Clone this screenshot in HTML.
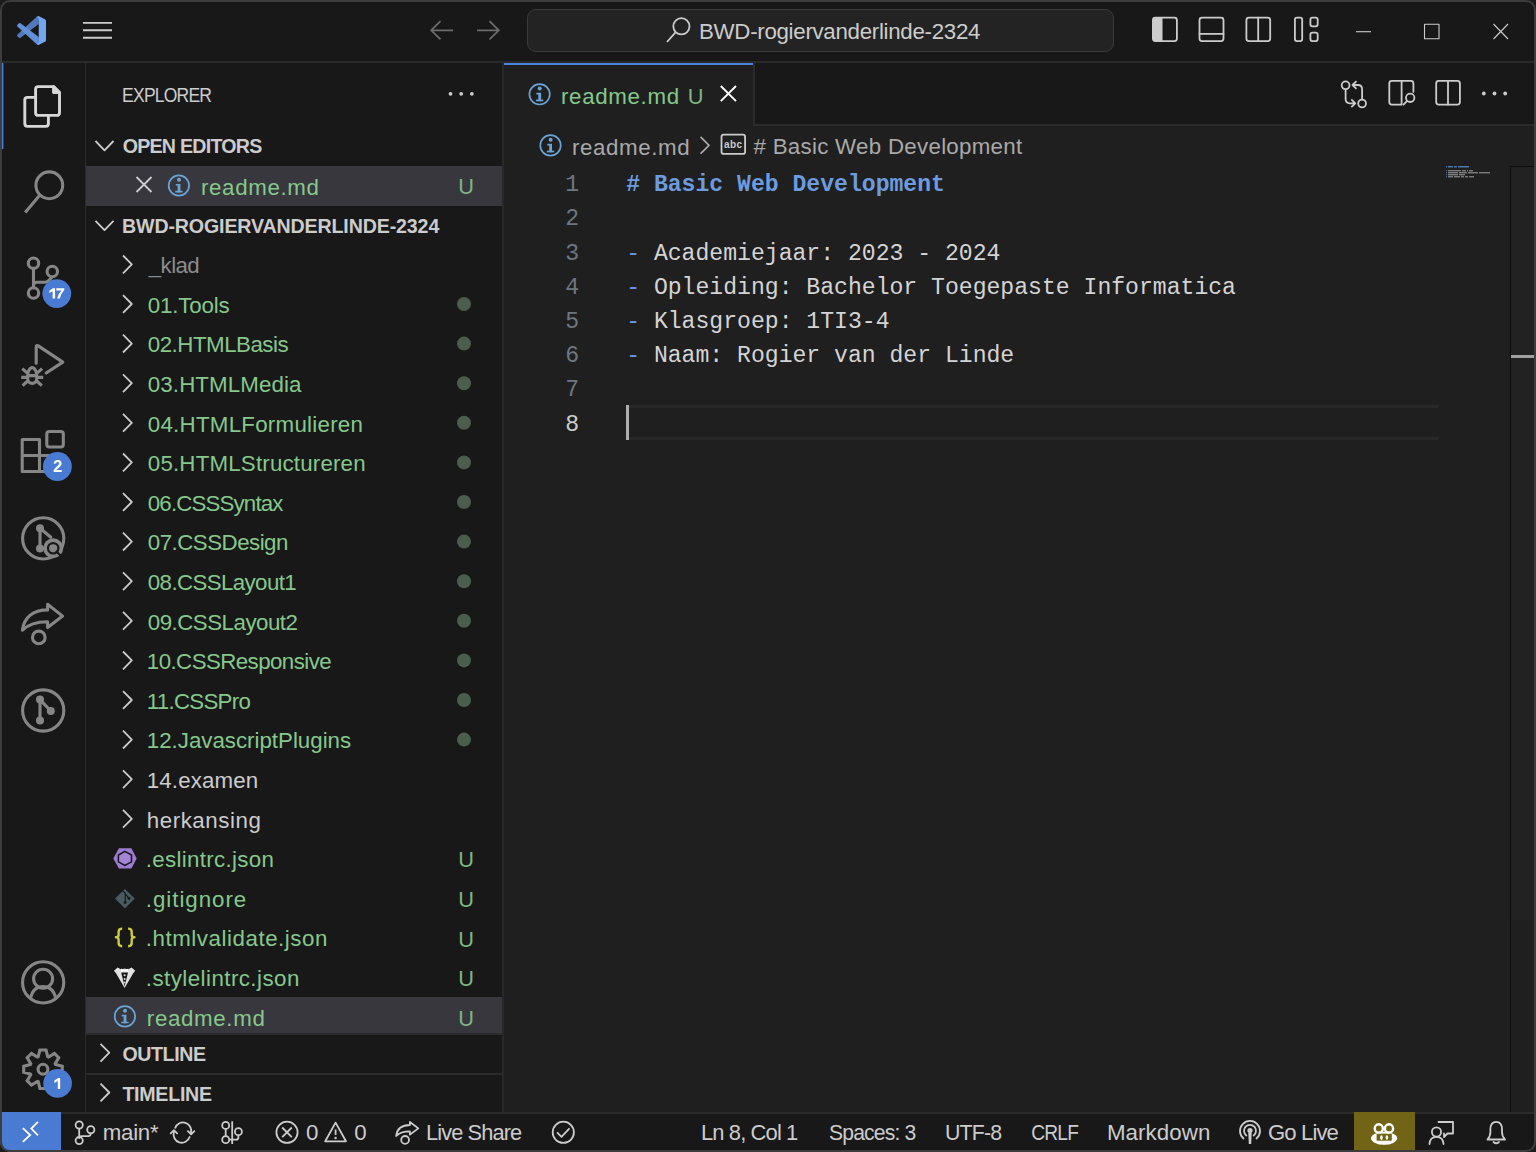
<!DOCTYPE html>
<html><head><meta charset="utf-8">
<style>
html,body{margin:0;padding:0;width:1536px;height:1152px;overflow:hidden;background:#1c1c1c}
#win{position:absolute;left:0;top:0;width:1536px;height:1152px;border-radius:10px;overflow:hidden;background:#181818}
.r{position:absolute}
.t{position:absolute;white-space:pre;line-height:1;font-family:"Liberation Sans",sans-serif}
.code{position:absolute;white-space:pre;font-family:"Liberation Mono",monospace;line-height:1}
svg{position:absolute;left:0;top:0}
#frame{position:absolute;left:0;top:0;width:1532px;height:1148px;border:2px solid #3d3d3d;border-radius:10px;box-shadow:0 0 0 4px #1c1c1c}
</style></head>
<body>
<div id="win">
<!-- backgrounds -->
<div class="r" style="left:0;top:0;width:1536px;height:62px;background:#181818"></div>
<div class="r" style="left:0;top:61px;width:1536px;height:2px;background:#2a2a2a"></div>
<!-- activity bar border -->
<div class="r" style="left:85px;top:63px;width:1px;height:1049px;background:#2b2b2b"></div>
<!-- sidebar border -->
<div class="r" style="left:502px;top:63px;width:2px;height:1049px;background:#282828"></div>
<!-- editor bg -->
<div class="r" style="left:504px;top:63px;width:1032px;height:1049px;background:#1f1f1f"></div>
<!-- tab container -->
<div class="r" style="left:504px;top:63px;width:1032px;height:62px;background:#181818"></div>
<div class="r" style="left:504px;top:124px;width:1032px;height:2px;background:#2b2b2b"></div>
<!-- active tab -->
<div class="r" style="left:504px;top:63px;width:249px;height:63px;background:#1f1f1f"></div>
<div class="r" style="left:504px;top:63px;width:249px;height:2px;background:#4a83dd"></div>
<div class="r" style="left:753px;top:63px;width:2px;height:63px;background:#2b2b2b"></div>
<!-- open editors selected row -->
<div class="r" style="left:86px;top:166px;width:416px;height:40px;background:#37373d"></div>
<!-- readme selected row -->
<div class="r" style="left:86px;top:997px;width:416px;height:36px;background:#37373d"></div>
<!-- outline / timeline borders -->
<div class="r" style="left:86px;top:1033px;width:416px;height:2px;background:#2b2b2b"></div>
<div class="r" style="left:86px;top:1073px;width:416px;height:2px;background:#2b2b2b"></div>
<!-- current line -->
<div class="r" style="left:626px;top:405px;width:812px;height:3px;background:#282828"></div>
<div class="r" style="left:626px;top:437px;width:812px;height:3px;background:#282828"></div>
<div class="r" style="left:626px;top:405px;width:3px;height:35px;background:#aeafad"></div>
<!-- overview ruler -->
<div class="r" style="left:1510px;top:166px;width:1px;height:946px;background:#0b0b10"></div>
<div class="r" style="left:1510px;top:166px;width:26px;height:1px;background:#0b0b10"></div>
<div class="r" style="left:1511px;top:167px;width:23px;height:753px;background:#222222"></div>
<div class="r" style="left:1511px;top:355px;width:23px;height:3px;background:#a0a0a0"></div>
<!-- status bar -->
<div class="r" style="left:0;top:1112px;width:1536px;height:40px;background:#181818"></div>
<div class="r" style="left:0;top:1112px;width:1536px;height:2px;background:#2b2b2b"></div>
<div class="r" style="left:0;top:1112px;width:61px;height:40px;background:#4a7bd2"></div>
<div class="r" style="left:1354px;top:1112px;width:61px;height:40px;background:#726416"></div>
<div class="r" style="left:527px;top:9px;width:587px;height:43px;box-sizing:border-box;border-radius:9px;background:#232323;border:1.6px solid #3a3a3a"></div>
<div class="code" style="left:565.14px;top:174.29px;font-size:23.1px;color:#6e7681;width:13.86px;text-align:right">1</div>
<div class="code" style="left:626.2px;top:174.29px;font-size:23.1px"><span style="color:#6c9cdf;font-weight:700"># Basic Web Development</span></div>
<div class="code" style="left:565.14px;top:208.49px;font-size:23.1px;color:#6e7681;width:13.86px;text-align:right">2</div>
<div class="code" style="left:565.14px;top:242.69px;font-size:23.1px;color:#6e7681;width:13.86px;text-align:right">3</div>
<div class="code" style="left:626.2px;top:242.69px;font-size:23.1px"><span style="color:#6796e6;font-weight:400">- </span><span style="color:#d4d4d4;font-weight:400">Academiejaar: 2023 - 2024</span></div>
<div class="code" style="left:565.14px;top:276.89px;font-size:23.1px;color:#6e7681;width:13.86px;text-align:right">4</div>
<div class="code" style="left:626.2px;top:276.89px;font-size:23.1px"><span style="color:#6796e6;font-weight:400">- </span><span style="color:#d4d4d4;font-weight:400">Opleiding: Bachelor Toegepaste Informatica</span></div>
<div class="code" style="left:565.14px;top:311.09px;font-size:23.1px;color:#6e7681;width:13.86px;text-align:right">5</div>
<div class="code" style="left:626.2px;top:311.09px;font-size:23.1px"><span style="color:#6796e6;font-weight:400">- </span><span style="color:#d4d4d4;font-weight:400">Klasgroep: 1TI3-4</span></div>
<div class="code" style="left:565.14px;top:345.29px;font-size:23.1px;color:#6e7681;width:13.86px;text-align:right">6</div>
<div class="code" style="left:626.2px;top:345.29px;font-size:23.1px"><span style="color:#6796e6;font-weight:400">- </span><span style="color:#d4d4d4;font-weight:400">Naam: Rogier van der Linde</span></div>
<div class="code" style="left:565.14px;top:379.49px;font-size:23.1px;color:#6e7681;width:13.86px;text-align:right">7</div>
<div class="code" style="left:565.14px;top:413.69px;font-size:23.1px;color:#cccccc;width:13.86px;text-align:right">8</div>
<div class="r" style="left:1446px;top:166px;width:1px;height:2px;background:linear-gradient(rgba(95,152,220,0.75) 50%,rgba(95,152,220,0.35) 50%)"></div>
<div class="r" style="left:1448px;top:166px;width:5px;height:2px;background:linear-gradient(rgba(95,152,220,0.75) 50%,rgba(95,152,220,0.35) 50%)"></div>
<div class="r" style="left:1454px;top:166px;width:3px;height:2px;background:linear-gradient(rgba(95,152,220,0.75) 50%,rgba(95,152,220,0.35) 50%)"></div>
<div class="r" style="left:1458px;top:166px;width:11px;height:2px;background:linear-gradient(rgba(95,152,220,0.75) 50%,rgba(95,152,220,0.35) 50%)"></div>
<div class="r" style="left:1446px;top:170px;width:1px;height:2px;background:linear-gradient(rgba(103,150,230,0.5) 50%,rgba(103,150,230,0.2) 50%)"></div>
<div class="r" style="left:1448px;top:170px;width:13px;height:2px;background:linear-gradient(rgba(212,212,212,0.5) 50%,rgba(212,212,212,0.22) 50%)"></div>
<div class="r" style="left:1462px;top:170px;width:4px;height:2px;background:linear-gradient(rgba(212,212,212,0.5) 50%,rgba(212,212,212,0.22) 50%)"></div>
<div class="r" style="left:1467px;top:170px;width:1px;height:2px;background:linear-gradient(rgba(212,212,212,0.5) 50%,rgba(212,212,212,0.22) 50%)"></div>
<div class="r" style="left:1469px;top:170px;width:4px;height:2px;background:linear-gradient(rgba(212,212,212,0.5) 50%,rgba(212,212,212,0.22) 50%)"></div>
<div class="r" style="left:1446px;top:172px;width:1px;height:2px;background:linear-gradient(rgba(103,150,230,0.5) 50%,rgba(103,150,230,0.2) 50%)"></div>
<div class="r" style="left:1448px;top:172px;width:10px;height:2px;background:linear-gradient(rgba(212,212,212,0.5) 50%,rgba(212,212,212,0.22) 50%)"></div>
<div class="r" style="left:1459px;top:172px;width:8px;height:2px;background:linear-gradient(rgba(212,212,212,0.5) 50%,rgba(212,212,212,0.22) 50%)"></div>
<div class="r" style="left:1468px;top:172px;width:10px;height:2px;background:linear-gradient(rgba(212,212,212,0.5) 50%,rgba(212,212,212,0.22) 50%)"></div>
<div class="r" style="left:1479px;top:172px;width:11px;height:2px;background:linear-gradient(rgba(212,212,212,0.5) 50%,rgba(212,212,212,0.22) 50%)"></div>
<div class="r" style="left:1446px;top:174px;width:1px;height:2px;background:linear-gradient(rgba(103,150,230,0.5) 50%,rgba(103,150,230,0.2) 50%)"></div>
<div class="r" style="left:1448px;top:174px;width:10px;height:2px;background:linear-gradient(rgba(212,212,212,0.5) 50%,rgba(212,212,212,0.22) 50%)"></div>
<div class="r" style="left:1459px;top:174px;width:6px;height:2px;background:linear-gradient(rgba(212,212,212,0.5) 50%,rgba(212,212,212,0.22) 50%)"></div>
<div class="r" style="left:1446px;top:176px;width:1px;height:2px;background:linear-gradient(rgba(103,150,230,0.5) 50%,rgba(103,150,230,0.2) 50%)"></div>
<div class="r" style="left:1448px;top:176px;width:5px;height:2px;background:linear-gradient(rgba(212,212,212,0.5) 50%,rgba(212,212,212,0.22) 50%)"></div>
<div class="r" style="left:1454px;top:176px;width:6px;height:2px;background:linear-gradient(rgba(212,212,212,0.5) 50%,rgba(212,212,212,0.22) 50%)"></div>
<div class="r" style="left:1461px;top:176px;width:3px;height:2px;background:linear-gradient(rgba(212,212,212,0.5) 50%,rgba(212,212,212,0.22) 50%)"></div>
<div class="r" style="left:1465px;top:176px;width:3px;height:2px;background:linear-gradient(rgba(212,212,212,0.5) 50%,rgba(212,212,212,0.22) 50%)"></div>
<div class="r" style="left:1469px;top:176px;width:5px;height:2px;background:linear-gradient(rgba(212,212,212,0.5) 50%,rgba(212,212,212,0.22) 50%)"></div>
<div class=t style="left:699.00px;top:21.32px;font-size:22.3px;letter-spacing:-0.294px;color:#cccccc;font-weight:400;font-family:'Liberation Sans', sans-serif">BWD-rogiervanderlinde-2324</div>
<div class=t style="left:122.20px;top:86.11px;font-size:19.6px;letter-spacing:-0.900px;transform:scaleX(0.8946);transform-origin:1.00px 0;color:#cccccc;font-weight:400;font-family:'Liberation Sans', sans-serif">EXPLORER</div>
<div class=t style="left:122.70px;top:136.71px;font-size:19.6px;letter-spacing:-0.731px;color:#cccccc;font-weight:700;font-family:'Liberation Sans', sans-serif">OPEN EDITORS</div>
<div class=t style="left:201.00px;top:176.62px;font-size:22.3px;letter-spacing:0.641px;color:#86c88c;font-weight:400;font-family:'Liberation Sans', sans-serif">readme.md</div>
<div class=t style="left:458.20px;top:176.15px;font-size:21.8px;letter-spacing:0.000px;color:#7db583;font-weight:400;font-family:'Liberation Sans', sans-serif">U</div>
<div class=t style="left:122.00px;top:216.71px;font-size:19.6px;letter-spacing:-0.126px;color:#cccccc;font-weight:700;font-family:'Liberation Sans', sans-serif">BWD-ROGIERVANDERLINDE-2324</div>
<div class=t style="left:148.80px;top:255.12px;font-size:22.3px;letter-spacing:-0.601px;color:#8c8c8c;font-weight:400;font-family:'Liberation Sans', sans-serif">_klad</div>
<div class=t style="left:147.80px;top:294.72px;font-size:22.3px;letter-spacing:-0.157px;color:#86c88c;font-weight:400;font-family:'Liberation Sans', sans-serif">01.Tools</div>
<div class=t style="left:147.80px;top:334.32px;font-size:22.3px;letter-spacing:-0.488px;color:#86c88c;font-weight:400;font-family:'Liberation Sans', sans-serif">02.HTMLBasis</div>
<div class=t style="left:147.80px;top:373.92px;font-size:22.3px;letter-spacing:0.116px;color:#86c88c;font-weight:400;font-family:'Liberation Sans', sans-serif">03.HTMLMedia</div>
<div class=t style="left:147.80px;top:413.52px;font-size:22.3px;letter-spacing:0.262px;color:#86c88c;font-weight:400;font-family:'Liberation Sans', sans-serif">04.HTMLFormulieren</div>
<div class=t style="left:147.80px;top:453.12px;font-size:22.3px;letter-spacing:0.190px;color:#86c88c;font-weight:400;font-family:'Liberation Sans', sans-serif">05.HTMLStructureren</div>
<div class=t style="left:147.80px;top:492.72px;font-size:22.3px;letter-spacing:-0.851px;color:#86c88c;font-weight:400;font-family:'Liberation Sans', sans-serif">06.CSSSyntax</div>
<div class=t style="left:147.80px;top:532.32px;font-size:22.3px;letter-spacing:-0.513px;color:#86c88c;font-weight:400;font-family:'Liberation Sans', sans-serif">07.CSSDesign</div>
<div class=t style="left:147.80px;top:571.92px;font-size:22.3px;letter-spacing:-0.611px;color:#86c88c;font-weight:400;font-family:'Liberation Sans', sans-serif">08.CSSLayout1</div>
<div class=t style="left:147.80px;top:611.52px;font-size:22.3px;letter-spacing:-0.507px;color:#86c88c;font-weight:400;font-family:'Liberation Sans', sans-serif">09.CSSLayout2</div>
<div class=t style="left:146.80px;top:651.12px;font-size:22.3px;letter-spacing:-0.566px;color:#86c88c;font-weight:400;font-family:'Liberation Sans', sans-serif">10.CSSResponsive</div>
<div class=t style="left:146.80px;top:690.72px;font-size:22.3px;letter-spacing:-0.735px;color:#86c88c;font-weight:400;font-family:'Liberation Sans', sans-serif">11.CSSPro</div>
<div class=t style="left:146.80px;top:730.32px;font-size:22.3px;letter-spacing:-0.008px;color:#86c88c;font-weight:400;font-family:'Liberation Sans', sans-serif">12.JavascriptPlugins</div>
<div class=t style="left:146.80px;top:769.92px;font-size:22.3px;letter-spacing:0.123px;color:#cccccc;font-weight:400;font-family:'Liberation Sans', sans-serif">14.examen</div>
<div class=t style="left:146.80px;top:809.52px;font-size:22.3px;letter-spacing:0.547px;color:#cccccc;font-weight:400;font-family:'Liberation Sans', sans-serif">herkansing</div>
<div class=t style="left:145.80px;top:849.12px;font-size:22.3px;letter-spacing:0.322px;color:#86c88c;font-weight:400;font-family:'Liberation Sans', sans-serif">.eslintrc.json</div>
<div class=t style="left:458.20px;top:849.35px;font-size:21.8px;letter-spacing:0.000px;color:#7db583;font-weight:400;font-family:'Liberation Sans', sans-serif">U</div>
<div class=t style="left:145.80px;top:888.72px;font-size:22.3px;letter-spacing:0.964px;color:#86c88c;font-weight:400;font-family:'Liberation Sans', sans-serif">.gitignore</div>
<div class=t style="left:458.20px;top:888.95px;font-size:21.8px;letter-spacing:0.000px;color:#7db583;font-weight:400;font-family:'Liberation Sans', sans-serif">U</div>
<div class=t style="left:145.80px;top:928.32px;font-size:22.3px;letter-spacing:0.549px;color:#86c88c;font-weight:400;font-family:'Liberation Sans', sans-serif">.htmlvalidate.json</div>
<div class=t style="left:458.20px;top:928.55px;font-size:21.8px;letter-spacing:0.000px;color:#7db583;font-weight:400;font-family:'Liberation Sans', sans-serif">U</div>
<div class=t style="left:145.80px;top:967.92px;font-size:22.3px;letter-spacing:0.455px;color:#86c88c;font-weight:400;font-family:'Liberation Sans', sans-serif">.stylelintrc.json</div>
<div class=t style="left:458.20px;top:968.15px;font-size:21.8px;letter-spacing:0.000px;color:#7db583;font-weight:400;font-family:'Liberation Sans', sans-serif">U</div>
<div class=t style="left:146.80px;top:1007.52px;font-size:22.3px;letter-spacing:0.654px;color:#86c88c;font-weight:400;font-family:'Liberation Sans', sans-serif">readme.md</div>
<div class=t style="left:458.20px;top:1007.75px;font-size:21.8px;letter-spacing:0.000px;color:#7db583;font-weight:400;font-family:'Liberation Sans', sans-serif">U</div>
<div class=t style="left:122.40px;top:1044.81px;font-size:19.6px;letter-spacing:-0.387px;color:#cccccc;font-weight:700;font-family:'Liberation Sans', sans-serif">OUTLINE</div>
<div class=t style="left:122.40px;top:1084.61px;font-size:19.6px;letter-spacing:-0.252px;color:#cccccc;font-weight:700;font-family:'Liberation Sans', sans-serif">TIMELINE</div>
<div class=t style="left:561.00px;top:85.52px;font-size:22.3px;letter-spacing:0.666px;color:#86c88c;font-weight:400;font-family:'Liberation Sans', sans-serif">readme.md</div>
<div class=t style="left:687.70px;top:85.65px;font-size:21.8px;letter-spacing:0.000px;color:#7db583;font-weight:400;font-family:'Liberation Sans', sans-serif">U</div>
<div class=t style="left:572.00px;top:136.62px;font-size:22.3px;letter-spacing:0.616px;color:#a9a9a9;font-weight:400;font-family:'Liberation Sans', sans-serif">readme.md</div>
<div class=t style="left:753.50px;top:136.22px;font-size:22.3px;letter-spacing:0.289px;color:#a9a9a9;font-weight:400;font-family:'Liberation Sans', sans-serif"># Basic Web Development</div>
<div class=t style="left:102.75px;top:1122.02px;font-size:22.3px;letter-spacing:-0.270px;color:#cccccc;font-weight:400;font-family:'Liberation Sans', sans-serif">main*</div>
<div class=t style="left:306.00px;top:1122.02px;font-size:22.3px;letter-spacing:0.000px;color:#cccccc;font-weight:400;font-family:'Liberation Sans', sans-serif">0</div>
<div class=t style="left:354.20px;top:1122.02px;font-size:22.3px;letter-spacing:0.000px;color:#cccccc;font-weight:400;font-family:'Liberation Sans', sans-serif">0</div>
<div class=t style="left:425.90px;top:1122.02px;font-size:22.3px;letter-spacing:-0.900px;transform:scaleX(0.9764);transform-origin:1.00px 0;color:#cccccc;font-weight:400;font-family:'Liberation Sans', sans-serif">Live Share</div>
<div class=t style="left:701.00px;top:1122.02px;font-size:22.3px;letter-spacing:-0.900px;transform:scaleX(0.9842);transform-origin:1.00px 0;color:#cccccc;font-weight:400;font-family:'Liberation Sans', sans-serif">Ln 8, Col 1</div>
<div class=t style="left:828.60px;top:1122.02px;font-size:22.3px;letter-spacing:-0.900px;transform:scaleX(0.9474);transform-origin:1.00px 0;color:#cccccc;font-weight:400;font-family:'Liberation Sans', sans-serif">Spaces: 3</div>
<div class=t style="left:945.25px;top:1122.02px;font-size:22.3px;letter-spacing:-0.900px;transform:scaleX(0.9567);transform-origin:1.00px 0;color:#cccccc;font-weight:400;font-family:'Liberation Sans', sans-serif">UTF-8</div>
<div class=t style="left:1030.90px;top:1122.02px;font-size:22.3px;letter-spacing:-0.900px;transform:scaleX(0.8608);transform-origin:1.00px 0;color:#cccccc;font-weight:400;font-family:'Liberation Sans', sans-serif">CRLF</div>
<div class=t style="left:1106.90px;top:1122.02px;font-size:22.3px;letter-spacing:0.093px;color:#cccccc;font-weight:400;font-family:'Liberation Sans', sans-serif">Markdown</div>
<div class=t style="left:1268.40px;top:1122.02px;font-size:22.3px;letter-spacing:-0.900px;transform:scaleX(0.9923);transform-origin:1.00px 0;color:#cccccc;font-weight:400;font-family:'Liberation Sans', sans-serif">Go Live</div>
<svg width="1536" height="1152" viewBox="0 0 1536 1152" fill="none" stroke-linecap="round" stroke-linejoin="round">
<g transform="translate(17,16) scale(0.29)"><path fill="#5279bb" d="M75.86 0.87 L75.01 27.3 L12.19 74.99 Q9.2 77 6.87 74.75 L1.36 69.74 Q-0.6 67 1.36 63.58 L68.76 2.08 Q72 -0.5 75.86 0.87 Z"/><path fill="#6290d8" d="M75.01 72.7 L75.86 99.13 Q72 100.5 68.76 97.92 L1.36 36.42 Q-0.6 33.2 1.36 30.26 L6.87 25.25 Q9.5 23 12.19 25.01 Z"/><path fill="#72a6ee" d="M70 1.8 Q72.5 0 75.86.87 L96.46 10.8 Q100 12.6 100 16.42 V83.58 Q100 87.4 96.46 89.2 L75.86 99.13 Q72.5 100 70 98.2 L75.01 90 V10 Z"/></g>
<path d="M83 22.9 H112 M83 30.3 H112 M83 37.7 H112" stroke="#cccccc" stroke-width="1.9" stroke-linecap="butt"/>
<path d="M453 30.3 H431.5 M440.5 21.2 L431.2 30.3 L440.5 39.4 M477 30.3 H498.5 M489.5 21.2 L498.8 30.3 L489.5 39.4" stroke="#6b6b6b" stroke-width="1.8" stroke-linecap="butt" stroke-linejoin="miter"/>
<circle cx="681.4" cy="26.3" r="8.1" stroke="#cccccc" stroke-width="1.8"/><path d="M675.5 32.4 L667 42" stroke="#cccccc" stroke-width="1.8" stroke-linecap="butt"/>
<rect x="1152.9" y="17.7" width="24" height="23.4" rx="2.5" stroke="#cccccc" stroke-width="1.8"/><path d="M1155 17.7 H1162.5 V41.1 H1155 Q1152.9 41.1 1152.9 39 V19.8 Q1152.9 17.7 1155 17.7Z" fill="#cccccc"/>
<rect x="1199.5" y="17.7" width="24" height="23.4" rx="2.5" stroke="#cccccc" stroke-width="1.8"/><path d="M1199.5 33.9 H1223.5" stroke="#cccccc" stroke-width="1.8"/>
<rect x="1246.4" y="17.7" width="23.8" height="23.4" rx="2.5" stroke="#cccccc" stroke-width="1.8"/><path d="M1258.2 17.7 V41.1" stroke="#cccccc" stroke-width="1.8"/>
<rect x="1294.9" y="17.7" width="7.3" height="23.4" rx="2" stroke="#cccccc" stroke-width="1.8"/><rect x="1310.4" y="17.7" width="7.3" height="8.6" rx="2" stroke="#cccccc" stroke-width="1.8"/><rect x="1310.4" y="32.6" width="7.3" height="8.5" rx="2" stroke="#cccccc" stroke-width="1.8"/>
<path d="M1356 31.7 H1371" stroke="#cccccc" stroke-width="1.1" stroke-linecap="butt"/><rect x="1424.5" y="24.3" width="14.5" height="14.5" stroke="#cccccc" stroke-width="1.1"/><path d="M1493.5 24 L1508 39 M1508 24 L1493.5 39" stroke="#cccccc" stroke-width="1.1" stroke-linecap="butt"/>
<rect x="2" y="63" width="1.4" height="86" fill="#4a83dd"/>
<g stroke="#d7d7d7" stroke-width="2.9"><path d="M35.6 97.4 H27.5 Q24.8 97.4 24.8 100 V123.6 Q24.8 126.4 27.5 126.4 H45.7 Q48.4 126.4 48.4 123.6 V115.4"/><path d="M38.3 86.6 H53.5 L59.5 92.6 V112.7 Q59.5 115.4 56.8 115.4 H38.3 Q35.6 115.4 35.6 112.7 V89.3 Q35.6 86.6 38.3 86.6 Z"/><path d="M53.5 86.6 V92.6 H59.5 Z" fill="#d7d7d7"/></g>
<g stroke="#868686" stroke-width="3.1"><circle cx="49.3" cy="185.3" r="13.4"/><path d="M39.5 195.5 L25.2 212.5" stroke-linecap="butt"/><circle cx="33.5" cy="263.2" r="5.2"/><circle cx="33.5" cy="293" r="5.2"/><circle cx="52.3" cy="271.5" r="5.2"/><path d="M33.5 268.4 V287.8 M33.5 285.5 Q33.5 282.3 37 282.3 H45 Q47.5 282.3 51.5 277.8"/><path d="M36.2 363.3 V347 Q36.2 344.6 38.3 345.9 L62.8 362.1 L46.2 373"/><path d="M27.7 375.6 H36.7 M27.7 375.6 V378.8 A4.5 4.6 0 0 0 36.7 378.8 V375.6 A4.5 8 0 0 0 27.7 375.6"/><path d="M21.2 377.4 H27 M37.4 377.4 H43.2 M22.3 368.6 L27.4 373.2 M42.1 368.6 L37 373.2 M22.6 385.6 L27.6 381 M41.8 385.6 L36.8 381" stroke-linecap="butt"/><path d="M22.2 439.5 H39.5 V471.5 H22.2 Z M22.2 455.5 H57.5 V471.5 H39.5" /><rect x="46.8" y="431.5" width="16.5" height="15.5" rx="2.5"/></g>
<circle cx="56.8" cy="293.6" r="14.4" fill="#4a7bd2"/><path d="M49.3 290.8 L53 288.2 H55.1 V298.6 H52.6 V291.2 L49.3 293 Z M56.3 288.2 H64.3 V290.1 Q60.6 294 59.8 298.6 H57.1 Q58 293.8 61.5 290.4 H56.3 Z" fill="#ffffff"/>
<circle cx="57.4" cy="466.5" r="14.4" fill="#4a7bd2"/><text x="57.4" y="472.4" fill="#ffffff" font-family="Liberation Sans, sans-serif" font-weight="700" font-size="16.5" text-anchor="middle" letter-spacing="-0.5">2</text>
<g stroke="#868686" stroke-width="3.1"><circle cx="43.2" cy="538.4" r="20.6"/><path d="M40 528.2 V548.5 M40 528.2 L50.8 537.2"/><circle cx="43.2" cy="710.5" r="20.6"/><path d="M40 699.6 V720.6 M40 699.6 L50.8 711"/><circle cx="43.15" cy="982.4" r="20.6"/><circle cx="43.1" cy="978.7" r="9.5"/><path d="M30.5 998.3 Q33 986.5 43.1 986.5 Q53.2 986.5 55.8 998.3"/><circle cx="38.8" cy="637.4" r="6.3"/><path d="M47.6 609.9 V604.3 L62.6 616.1 L47.6 627.6 V621.7 C35.2 621.7 27.9 624.6 22.4 630.2 C23.9 617.2 33.2 609.9 47.6 609.9 Z"/><path d="M39.91 1049.94 L46.01 1049.94 L47.70 1056.67 L48.47 1056.99 L54.42 1053.42 L58.74 1057.74 L55.17 1063.69 L55.49 1064.46 L62.22 1066.15 L62.22 1072.25 L55.49 1073.94 L55.17 1074.71 L58.74 1080.66 L54.42 1084.98 L48.47 1081.41 L47.70 1081.73 L46.01 1088.46 L39.91 1088.46 L38.22 1081.73 L37.45 1081.41 L31.50 1084.98 L27.18 1080.66 L30.75 1074.71 L30.43 1073.94 L23.70 1072.25 L23.70 1066.15 L30.43 1064.46 L30.75 1063.69 L27.18 1057.74 L31.50 1053.42 L37.45 1056.99 L38.22 1056.67 Z" stroke-width="3.1" stroke-linejoin="miter"/><circle cx="42.96" cy="1069.2" r="4.9" stroke-width="3.1"/></g>
<g fill="#868686"><circle cx="40" cy="528.2" r="4"/><circle cx="40" cy="548.5" r="4"/><circle cx="40" cy="699.6" r="4"/><circle cx="50.8" cy="711" r="4"/><circle cx="40" cy="720.6" r="4"/><circle cx="53.2" cy="548.3" r="10"/></g><circle cx="53.2" cy="548.3" r="5.2" stroke="#181818" stroke-width="2.2"/><path d="M56.5 551.5 L60 555" stroke="#181818" stroke-width="2.2"/>
<circle cx="57.6" cy="1083.4" r="14.3" fill="#4a7bd2"/><path d="M54.4 1080.6 L58.2 1078 H60.2 V1089 H57.8 V1081 L54.4 1083 Z" fill="#ffffff"/>
<g fill="#cccccc"><circle cx="450.5" cy="93.8" r="1.9"/><circle cx="461.2" cy="93.8" r="1.9"/><circle cx="471.9" cy="93.8" r="1.9"/></g>
<path d="M95.5 141 L104.5 150.3 L113.5 141" stroke="#cccccc" stroke-width="1.8" stroke-linecap="butt"/>
<path d="M95.5 220.8 L104.5 230.10000000000002 L113.5 220.8" stroke="#cccccc" stroke-width="1.8" stroke-linecap="butt"/>
<path d="M136.5 177 L151.5 192 M151.5 177 L136.5 192" stroke="#cccccc" stroke-width="1.8" stroke-linecap="butt"/>
<circle cx="178.9" cy="185.5" r="10.2" stroke="#6aa4d6" stroke-width="1.7"/><circle cx="179.00" cy="179.80" r="2" fill="#6aa4d6"/><path d="M175.70 183.90 H180.40 V192.40 H177.60 V185.60 H175.70 Z" fill="#6aa4d6"/><path d="M175.20 191.60 H182.60" stroke="#6aa4d6" stroke-width="1.7" stroke-linecap="butt"/>
<path d="M123 255.49999999999997 L131.8 264.4 L123 273.29999999999995" stroke="#cccccc" stroke-width="1.8" stroke-linecap="butt"/>
<path d="M123 295.1 L131.8 304.0 L123 312.9" stroke="#cccccc" stroke-width="1.8" stroke-linecap="butt"/>
<circle cx="464" cy="304.0" r="7" fill="#4b5e4b"/>
<path d="M123 334.7 L131.8 343.59999999999997 L123 352.49999999999994" stroke="#cccccc" stroke-width="1.8" stroke-linecap="butt"/>
<circle cx="464" cy="343.59999999999997" r="7" fill="#4b5e4b"/>
<path d="M123 374.3 L131.8 383.2 L123 392.09999999999997" stroke="#cccccc" stroke-width="1.8" stroke-linecap="butt"/>
<circle cx="464" cy="383.2" r="7" fill="#4b5e4b"/>
<path d="M123 413.9 L131.8 422.79999999999995 L123 431.69999999999993" stroke="#cccccc" stroke-width="1.8" stroke-linecap="butt"/>
<circle cx="464" cy="422.79999999999995" r="7" fill="#4b5e4b"/>
<path d="M123 453.5 L131.8 462.4 L123 471.29999999999995" stroke="#cccccc" stroke-width="1.8" stroke-linecap="butt"/>
<circle cx="464" cy="462.4" r="7" fill="#4b5e4b"/>
<path d="M123 493.1 L131.8 502.0 L123 510.9" stroke="#cccccc" stroke-width="1.8" stroke-linecap="butt"/>
<circle cx="464" cy="502.0" r="7" fill="#4b5e4b"/>
<path d="M123 532.6999999999999 L131.8 541.5999999999999 L123 550.4999999999999" stroke="#cccccc" stroke-width="1.8" stroke-linecap="butt"/>
<circle cx="464" cy="541.5999999999999" r="7" fill="#4b5e4b"/>
<path d="M123 572.3000000000001 L131.8 581.2 L123 590.1" stroke="#cccccc" stroke-width="1.8" stroke-linecap="butt"/>
<circle cx="464" cy="581.2" r="7" fill="#4b5e4b"/>
<path d="M123 611.9 L131.8 620.8 L123 629.6999999999999" stroke="#cccccc" stroke-width="1.8" stroke-linecap="butt"/>
<circle cx="464" cy="620.8" r="7" fill="#4b5e4b"/>
<path d="M123 651.5 L131.8 660.4 L123 669.3" stroke="#cccccc" stroke-width="1.8" stroke-linecap="butt"/>
<circle cx="464" cy="660.4" r="7" fill="#4b5e4b"/>
<path d="M123 691.1 L131.8 700.0 L123 708.9" stroke="#cccccc" stroke-width="1.8" stroke-linecap="butt"/>
<circle cx="464" cy="700.0" r="7" fill="#4b5e4b"/>
<path d="M123 730.7 L131.8 739.6 L123 748.5" stroke="#cccccc" stroke-width="1.8" stroke-linecap="butt"/>
<circle cx="464" cy="739.6" r="7" fill="#4b5e4b"/>
<path d="M123 770.3000000000001 L131.8 779.2 L123 788.1" stroke="#cccccc" stroke-width="1.8" stroke-linecap="butt"/>
<path d="M123 809.9 L131.8 818.8 L123 827.6999999999999" stroke="#cccccc" stroke-width="1.8" stroke-linecap="butt"/>
<path d="M113.3 858.4 L118.9 848.3 H131.4 L136.7 858.4 L131.4 868.6 H118.9 Z" fill="#9d7dd2"/><path d="M124.9 851.4 L131.5 855 V861.9 L124.9 865.4 L118.4 861.9 V855 Z" fill="#a583d6" stroke="#161616" stroke-width="1.5" stroke-linejoin="miter"/>
<path d="M124.9 888.9 L134.8 898.6 L124.9 908.4 L115 898.6 Z" fill="#4a5a63"/><path d="M122.6 890.6 L125.2 893.2 V902.3 M125.2 893.6 L128.9 898.4" stroke="#161616" stroke-width="1.1" stroke-linecap="butt"/><circle cx="125.1" cy="902.5" r="1.4" fill="#161616"/><circle cx="129" cy="898.5" r="1.4" fill="#161616"/>
<path d="M122.2 928.6 Q118.6 928.6 118.6 931.8 V935 Q118.6 937.3 115.9 937.3 Q118.6 937.3 118.6 939.6 V943 Q118.6 946.2 122.2 946.2 M128.1 928.6 Q131.7 928.6 131.7 931.8 V935 Q131.7 937.3 134.4 937.3 Q131.7 937.3 131.7 939.6 V943 Q131.7 946.2 128.1 946.2" stroke="#cbcb41" stroke-width="2.4" stroke-linecap="butt"/>
<path d="M114 970.8 L117.6 967.6 L121.2 969.6 L124.6 968.6 L128 969.6 L131.6 967.6 L135.2 970.8 L133.2 973.2 L124.6 988 L116 973.2 Z" fill="#e2e2e2"/><path d="M121.2 972.6 L128 972.6 L124.6 986.5 Z" fill="#181818"/><path d="M121 968.6 L124.6 970.4 L128.2 968.6 V972.2 L124.6 970.8 L121 972.2 Z" fill="#ffffff"/><circle cx="124.6" cy="975.3" r="1" fill="#e2e2e2"/><circle cx="124.6" cy="978.9" r="1" fill="#e2e2e2"/><circle cx="124.6" cy="982.4" r="0.9" fill="#e2e2e2"/>
<circle cx="124.89999999999999" cy="1016.4" r="10.2" stroke="#6aa4d6" stroke-width="1.7"/><circle cx="125.00" cy="1010.70" r="2" fill="#6aa4d6"/><path d="M121.70 1014.80 H126.40 V1023.30 H123.60 V1016.50 H121.70 Z" fill="#6aa4d6"/><path d="M121.20 1022.50 H128.60" stroke="#6aa4d6" stroke-width="1.7" stroke-linecap="butt"/>
<path d="M100.5 1043.8 L109.3 1052.7 L100.5 1061.6000000000001" stroke="#cccccc" stroke-width="1.8" stroke-linecap="butt"/>
<path d="M100.5 1083.6 L109.3 1092.5 L100.5 1101.4" stroke="#cccccc" stroke-width="1.8" stroke-linecap="butt"/>
<circle cx="539.5999999999999" cy="94.3" r="10.2" stroke="#6aa4d6" stroke-width="1.7"/><circle cx="539.70" cy="88.60" r="2" fill="#6aa4d6"/><path d="M536.40 92.70 H541.10 V101.20 H538.30 V94.40 H536.40 Z" fill="#6aa4d6"/><path d="M535.90 100.40 H543.30" stroke="#6aa4d6" stroke-width="1.7" stroke-linecap="butt"/>
<path d="M720.8 86 L736 101.2 M736 86 L720.8 101.2" stroke="#ffffff" stroke-width="1.9" stroke-linecap="butt"/>
<circle cx="550.5" cy="145.4" r="10.2" stroke="#6aa4d6" stroke-width="1.7"/><circle cx="550.60" cy="139.70" r="2" fill="#6aa4d6"/><path d="M547.30 143.80 H552.00 V152.30 H549.20 V145.50 H547.30 Z" fill="#6aa4d6"/><path d="M546.80 151.50 H554.20" stroke="#6aa4d6" stroke-width="1.7" stroke-linecap="butt"/>
<path d="M700.6 136.9 L709.0 145.3 L700.6 153.70000000000002" stroke="#a9a9a9" stroke-width="1.7" stroke-linecap="butt"/>
<rect x="721.5" y="134.7" width="23.6" height="19.2" rx="2.2" stroke="#cccccc" stroke-width="1.8"/><text x="733.3" y="148.2" fill="#cccccc" font-family="Liberation Sans, sans-serif" font-weight="700" font-size="10" text-anchor="middle" letter-spacing="0.4">abc</text>
<g stroke="#cccccc" stroke-width="1.8"><circle cx="1345.6" cy="85.3" r="3.9"/><circle cx="1362.1" cy="103.5" r="3.9"/><path d="M1345.6 89.3 V99 Q1345.6 103.3 1350 103.3 H1355.5 M1351.3 99.4 L1355.3 103.3 L1351.3 107.2" stroke-linecap="butt"/><path d="M1362.1 99.5 V89.3 Q1362.1 85 1357.7 85 H1352.5 M1356.5 81.1 L1352.5 85 L1356.5 88.9" stroke-linecap="butt"/><path d="M1413.4 91.9 V83.4 Q1413.4 80.9 1410.9 80.9 H1391.8 Q1389.3 80.9 1389.3 83.4 V102.1 Q1389.3 104.6 1391.8 104.6 H1401.6 M1401.6 80.9 V104.6"/><circle cx="1410.2" cy="97.8" r="4.2"/><path d="M1407.2 100.9 L1403 105.2" stroke-linecap="butt"/><rect x="1436.2" y="80.9" width="23.7" height="23.7" rx="2.5"/><path d="M1448 80.9 V104.6"/></g>
<g fill="#cccccc"><circle cx="1483.8" cy="93.5" r="1.9"/><circle cx="1494.5" cy="93.5" r="1.9"/><circle cx="1505.2" cy="93.5" r="1.9"/></g>
<path d="M22.8 1128.2 L30.2 1135 L22.8 1141.9 M38 1121.9 L31.3 1128.6 L38 1135.3" stroke="#ffffff" stroke-width="1.8" stroke-linecap="butt" stroke-linejoin="miter"/>
<g stroke="#cccccc" stroke-width="1.8"><circle cx="79.2" cy="1125" r="3.6"/><circle cx="79.2" cy="1140.6" r="3.6"/><circle cx="90.8" cy="1129.8" r="3.6"/><path d="M79.2 1128.6 V1137 M90.8 1133.4 Q90.8 1136.2 87 1136.2 H81.5 Q79.2 1136.2 79.2 1138"/><path d="M175.3 1127.8 A8.2 8.2 0 0 1 190.9 1132.8 M189.6 1137 A8.2 8.2 0 0 1 173.9 1132"/><path d="M187.4 1130.6 L191.1 1134.3 L194.8 1130.6 M170.2 1133.8 L173.9 1130.1 L177.6 1133.8" stroke-linecap="butt"/><circle cx="225.7" cy="1125.4" r="3.5"/><circle cx="225.7" cy="1139.7" r="3.5"/><circle cx="238.4" cy="1131.7" r="3.5"/><path d="M225.7 1128.9 V1136.2 M232.2 1121.3 V1143.9 M238.4 1135.2 V1137.2 Q238.4 1139.7 235.9 1139.7 H229.2" stroke-linecap="butt"/><circle cx="287" cy="1132.3" r="10.6"/><path d="M282.2 1127.5 L291.8 1137.1 M291.8 1127.5 L282.2 1137.1" stroke-linecap="butt"/><path d="M335.6 1122.6 L346 1141.3 H325.2 Z"/><path d="M335.6 1129.5 V1135" stroke-linecap="butt"/><path d="M409.9 1125 V1122 L418.3 1128.4 L409.9 1134.6 V1131.4 C403 1131.4 399 1133 396.2 1136 C397 1129 402 1125 409.9 1125 Z"/><circle cx="405.1" cy="1139.9" r="3.9"/><circle cx="563.3" cy="1132.3" r="10.6"/><path d="M557.5 1132.8 L561.5 1136.8 L569 1128.8"/><path d="M1243.5 1138.5 A10 10 0 1 1 1256.5 1138.5 M1246.3 1135.5 A6 6 0 1 1 1253.7 1135.5"/><circle cx="1436.5" cy="1132" r="4.6"/><path d="M1429.5 1144 Q1430 1136.8 1436.5 1136.8 Q1443 1136.8 1443.5 1144 M1438.5 1122 H1453 V1133.5 H1447.5 L1444 1137 V1133.5"/><path d="M1487.5 1139.5 H1505 Q1502 1136.5 1502 1132 V1129.5 Q1502 1121.8 1496.2 1121.8 Q1490.4 1121.8 1490.4 1129.5 V1132 Q1490.4 1136.5 1487.5 1139.5 Z M1493.5 1142 Q1496.2 1144.5 1499 1142"/></g>
<circle cx="563.3" cy="0" r="0"/>
<g fill="#cccccc"><circle cx="335.6" cy="1138" r="1.2"/><circle cx="1250" cy="1130.5" r="2.6"/><path d="M1248.3 1133 H1251.7 L1251.2 1144 H1248.8 Z"/></g>
<ellipse cx="1384.1" cy="1138.3" rx="13" ry="6.5" fill="#ffffff"/><rect x="1376.6" y="1133.6" width="15.2" height="7.1" fill="#726416"/><ellipse cx="1381.4" cy="1137.6" rx="1.3" ry="2.4" fill="#ffffff"/><ellipse cx="1386.9" cy="1137.6" rx="1.3" ry="2.4" fill="#ffffff"/><circle cx="1378.8" cy="1128.4" r="4.1" stroke="#ffffff" stroke-width="2.4" fill="#726416"/><circle cx="1389" cy="1128.4" r="4.1" stroke="#ffffff" stroke-width="2.4" fill="#726416"/>
</svg>
</div>
<div id="frame"></div>
</body></html>
